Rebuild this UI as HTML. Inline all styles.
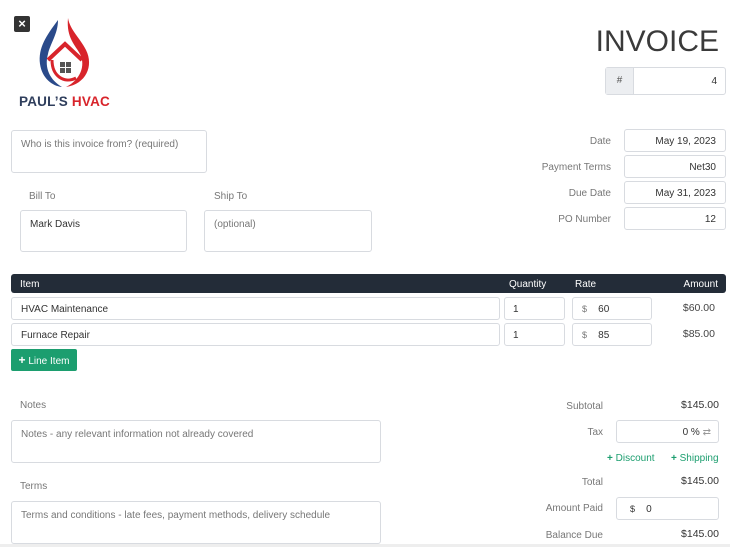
<!DOCTYPE html>
<html><head><meta charset="utf-8"><style>
body{margin:0;width:730px;height:547px;background:#fff;font-family:"Liberation Sans",sans-serif;position:relative;overflow:hidden;color:#333}
.a{position:absolute}
.in{position:absolute;border:1px solid #d8dbe0;border-radius:3px;background:#fff;box-sizing:border-box;font-size:10px;color:#333}
.ph{color:#777}
.lbl{position:absolute;font-size:10px;color:#777}
.r{text-align:right}
</style></head><body>
<div class="a" style="left:14px;top:16px;width:16px;height:16px;background:#333;border-radius:2px;color:#fff;font-size:13px;line-height:16px;text-align:center;font-weight:bold">×</div>
<svg class="a" style="left:36px;top:16px" width="58" height="74" viewBox="0 0 58 74">
<path d="M22 4 C10 20 2 32 4 48 C6 62 16 70 26 71 C14 64 8 52 12 38 C14 28 22 18 22 4Z" fill="#2a4a8a"/>
<path d="M32 2 C34 14 44 22 50 34 C58 50 50 68 30 71 C44 64 50 50 44 38 C40 30 30 22 32 2Z" fill="#d8242b"/>
<path d="M12 44 L29 28 L46 44" fill="none" stroke="#d8242b" stroke-width="4"/>
<path d="M16 44 C16 60 28 68 40 62" fill="none" stroke="#d8242b" stroke-width="3"/>
<rect x="24" y="46" width="5" height="5" fill="#555"/><rect x="30" y="46" width="5" height="5" fill="#555"/>
<rect x="24" y="52" width="5" height="5" fill="#555"/><rect x="30" y="52" width="5" height="5" fill="#555"/>
</svg>
<div class="a" style="left:19px;top:94px;font-size:13.5px;font-weight:bold;color:#2f3e5c;letter-spacing:0.2px">PAUL’S <span style="color:#d8242b">HVAC</span></div>
<div class="a" style="left:560px;top:25px;width:159px;text-align:right;font-size:30px;color:#3a3a3a;font-weight:300">INVOICE</div>
<div class="in" style="left:605px;top:67px;width:121px;height:28px"><div class="a" style="left:0;top:0;width:27px;height:26px;background:#eceef1;border-right:1px solid #d8dbe0;text-align:center;line-height:26px;color:#555">#</div><div class="a" style="right:8px;top:8px">4</div></div>
<div class="in ph" style="left:11px;top:130px;width:196px;height:43px;padding:8px 9px">Who is this invoice from? (required)</div>
<div class="lbl" style="left:29px;top:191px">Bill To</div>
<div class="lbl" style="left:214px;top:191px">Ship To</div>
<div class="in" style="left:20px;top:210px;width:167px;height:42px;padding:8px 9px">Mark Davis</div>
<div class="in ph" style="left:204px;top:210px;width:168px;height:42px;padding:8px 9px">(optional)</div>
<div class="lbl r" style="left:500px;width:111px;top:136px">Date</div>
<div class="lbl r" style="left:500px;width:111px;top:162px">Payment Terms</div>
<div class="lbl r" style="left:500px;width:111px;top:188px">Due Date</div>
<div class="lbl r" style="left:500px;width:111px;top:214px">PO Number</div>
<div class="in r" style="left:624px;top:129px;width:102px;height:23px;padding:6px 9px">May 19, 2023</div>
<div class="in r" style="left:624px;top:155px;width:102px;height:23px;padding:6px 9px">Net30</div>
<div class="in r" style="left:624px;top:181px;width:102px;height:23px;padding:6px 9px">May 31, 2023</div>
<div class="in r" style="left:624px;top:207px;width:102px;height:23px;padding:6px 9px">12</div>
<div class="a" style="left:11px;top:274px;width:715px;height:19px;background:#232c38;border-radius:3px;color:#fff;font-size:10px"><span class="a" style="left:9px;top:5px">Item</span><span class="a" style="left:498px;top:5px">Quantity</span><span class="a" style="left:564px;top:5px">Rate</span><span class="a" style="right:8px;top:5px">Amount</span></div>
<div class="in" style="left:11px;top:297px;width:489px;height:23px;padding:6px 9px">HVAC Maintenance</div>
<div class="in" style="left:504px;top:297px;width:61px;height:23px;padding:6px 8px">1</div>
<div class="in" style="left:572px;top:297px;width:80px;height:23px;padding:6px 9px"><span style="color:#777;font-size:9px">$</span>&nbsp;&nbsp;&nbsp;&nbsp;60</div>
<div class="a r" style="left:640px;width:75px;top:302px;font-size:10.5px;color:#444">$60.00</div>
<div class="in" style="left:11px;top:323px;width:489px;height:23px;padding:6px 9px">Furnace Repair</div>
<div class="in" style="left:504px;top:323px;width:61px;height:23px;padding:6px 8px">1</div>
<div class="in" style="left:572px;top:323px;width:80px;height:23px;padding:6px 9px"><span style="color:#777;font-size:9px">$</span>&nbsp;&nbsp;&nbsp;&nbsp;85</div>
<div class="a r" style="left:640px;width:75px;top:328px;font-size:10.5px;color:#444">$85.00</div>
<div class="a" style="left:11px;top:349px;width:66px;height:22px;background:#1c9e6f;border-radius:2px;color:#fff;font-size:10px;line-height:22px;text-align:center"><b style="font-size:12px">+</b> Line Item</div>
<div class="lbl" style="left:20px;top:400px">Notes</div>
<div class="in ph" style="left:11px;top:420px;width:370px;height:43px;padding:8px 9px">Notes - any relevant information not already covered</div>
<div class="lbl" style="left:20px;top:481px">Terms</div>
<div class="in ph" style="left:11px;top:501px;width:370px;height:43px;padding:8px 9px">Terms and conditions - late fees, payment methods, delivery schedule</div>
<div class="lbl r" style="left:500px;width:103px;top:401px">Subtotal</div>
<div class="a r" style="left:640px;width:79px;top:399px;font-size:10.5px">$145.00</div>
<div class="lbl r" style="left:500px;width:103px;top:427px">Tax</div>
<div class="in r" style="left:616px;top:420px;width:103px;height:23px;padding:6px 7px">0 % <span style="color:#999">⇄</span></div>
<div class="a" style="left:607px;top:453px;font-size:10px;color:#1c9e6f"><b>+</b> Discount</div>
<div class="a" style="left:671px;top:453px;font-size:10px;color:#1c9e6f"><b>+</b> Shipping</div>
<div class="lbl r" style="left:500px;width:103px;top:477px">Total</div>
<div class="a r" style="left:640px;width:79px;top:475px;font-size:10.5px">$145.00</div>
<div class="lbl r" style="left:500px;width:103px;top:503px">Amount Paid</div>
<div class="in" style="left:616px;top:497px;width:103px;height:23px;padding:6px 13px"><span style="font-size:9px">$</span>&nbsp;&nbsp;&nbsp;&nbsp;0</div>
<div class="lbl r" style="left:500px;width:103px;top:530px">Balance Due</div>
<div class="a r" style="left:640px;width:79px;top:528px;font-size:10.5px">$145.00</div>
<div class="a" style="left:0;top:544px;width:730px;height:3px;background:#eee"></div>
</body></html>
